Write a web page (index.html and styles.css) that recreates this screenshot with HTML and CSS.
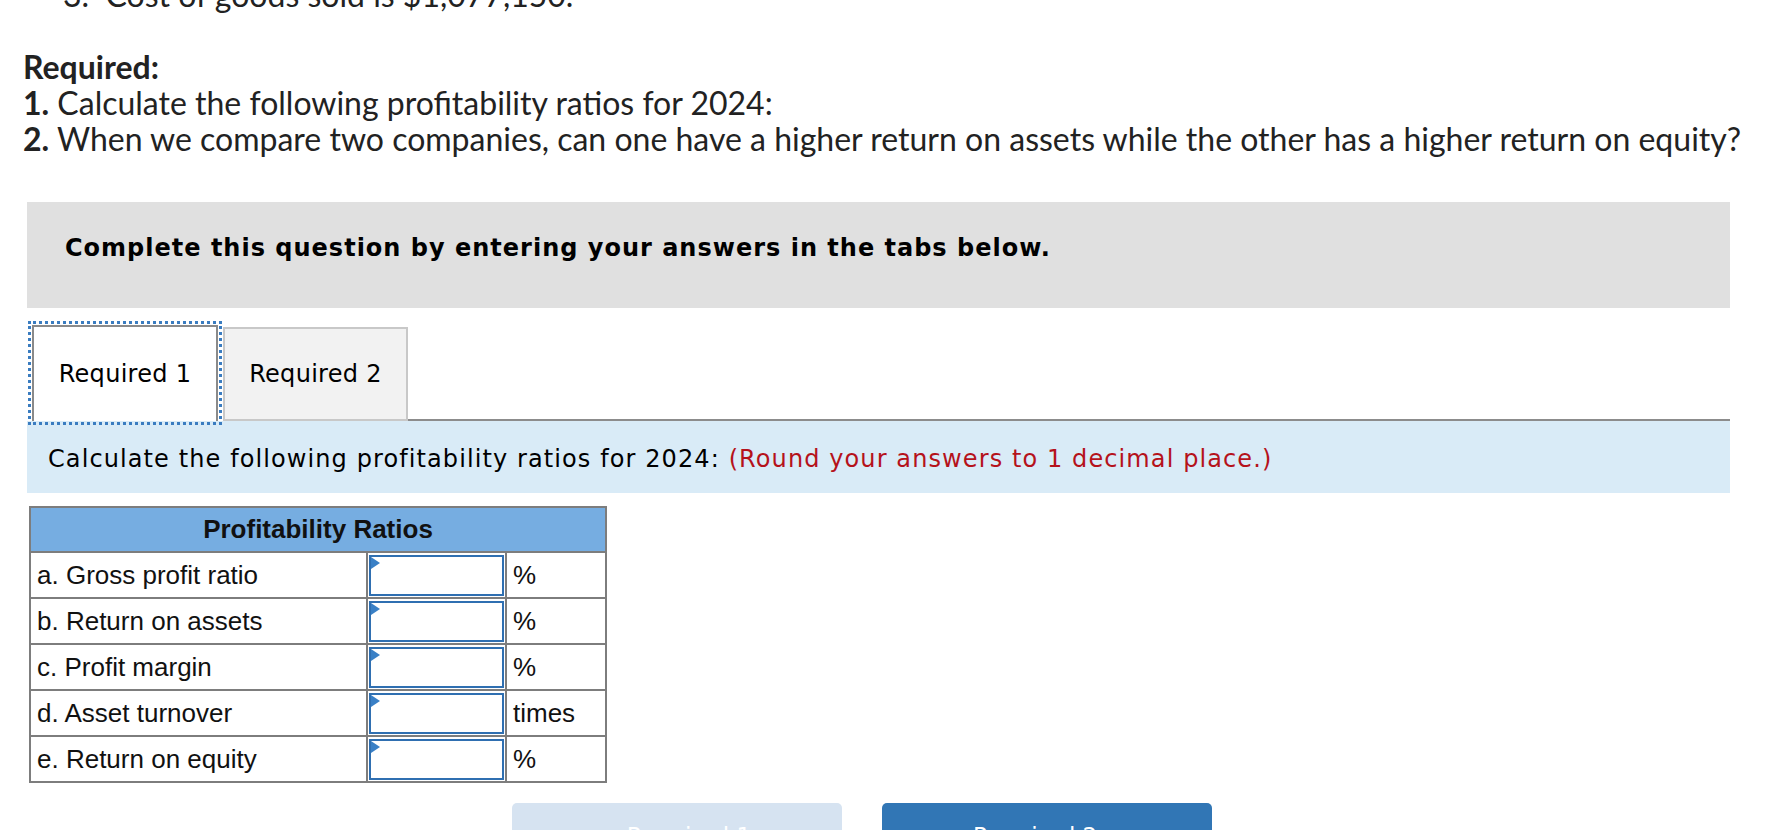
FILE: index.html
```html
<!DOCTYPE html>
<html lang="en">
<head>
<meta charset="utf-8">
<title>Profitability Ratios</title>
<link rel="stylesheet" href="styles.css">
</head>
<body>
<div class="page">
  <p class="given">3.&nbsp; Cost of goods sold is $1,077,150.</p>
  <div class="required">
    <p class="req-title">Required:</p>
    <p class="req-line"><b>1.</b> Calculate the following profitability ratios for 2024:</p>
    <p class="req-line"><b>2.</b> When we compare two companies, can one have a higher return on assets while the other has a higher return on equity?</p>
  </div>

  <div class="instructions">Complete this question by entering your answers in the tabs below.</div>

  <div class="tabs">
    <button class="tab tab-active">Required 1</button>
    <button class="tab tab-idle">Required 2</button>
    <div class="tab-rest"></div>
  </div>

  <div class="prompt">Calculate the following profitability ratios for 2024: <span class="hint">(Round your answers to 1 decimal place.)</span></div>

  <table class="ratios">
    <colgroup>
      <col class="c-label"><col class="c-input"><col class="c-unit">
    </colgroup>
    <thead>
      <tr><th colspan="3">Profitability Ratios</th></tr>
    </thead>
    <tbody>
      <tr><td class="label">a. Gross profit ratio</td><td class="cell-input"><div class="field"><span class="flag"></span></div></td><td class="unit">%</td></tr>
      <tr><td class="label">b. Return on assets</td><td class="cell-input"><div class="field"><span class="flag"></span></div></td><td class="unit">%</td></tr>
      <tr><td class="label">c. Profit margin</td><td class="cell-input"><div class="field"><span class="flag"></span></div></td><td class="unit">%</td></tr>
      <tr><td class="label">d. Asset turnover</td><td class="cell-input"><div class="field"><span class="flag"></span></div></td><td class="unit">times</td></tr>
      <tr><td class="label">e. Return on equity</td><td class="cell-input"><div class="field"><span class="flag"></span></div></td><td class="unit">%</td></tr>
    </tbody>
  </table>

  <div class="nav">
    <button class="nav-btn nav-prev">&#x2039;&nbsp; Required 1</button>
    <button class="nav-btn nav-next">Required 2&nbsp; &#x203A;</button>
  </div>
</div>
</body>
</html>
```

FILE: styles.css
```css
html, body {
  margin: 0;
  padding: 0;
  background: #ffffff;
  overflow: hidden;
}

.page {
  padding-left: 23px;
  width: 1707px;
  font-family: Lato, "Open Sans", sans-serif;
  color: #222222;
}

.given {
  margin: -23px 0 0 40px;
  font-size: 32px;
  line-height: 36px;
  white-space: nowrap;
}

.required {
  margin-top: 36px;
}

.required p {
  margin: 0;
  font-size: 32px;
  line-height: 36px;
  white-space: nowrap;
}

.req-title {
  font-weight: 700;
}

.req-line b {
  font-weight: 700;
}

.instructions {
  margin: 45px 0 0 4px;
  width: 1703px;
  box-sizing: border-box;
  height: 106px;
  padding: 32px 0 0 38px;
  background: #e0e0e0;
  font-family: "DejaVu Sans", Verdana, sans-serif;
  font-weight: 700;
  font-size: 24px;
  letter-spacing: 1px;
  color: #000000;
}

.tabs {
  display: flex;
  align-items: flex-end;
  margin: 17px 0 0 9px;
  width: 1698px;
  height: 96px;
}

.tab {
  box-sizing: border-box;
  height: 94px;
  padding: 0;
  font-family: "DejaVu Sans", Verdana, sans-serif;
  font-size: 24px;
  letter-spacing: 0.3px;
  color: #000000;
  cursor: pointer;
}

.tab-active {
  width: 186px;
  background: #ffffff;
  border: 2px solid #8a8a8a;
  border-bottom: none;
  outline: 3px dotted #3a7cc0;
  outline-offset: 1px;
  height: 96px;
  position: relative;
  z-index: 1;
}

.tab-idle {
  width: 185px;
  margin-left: 5px;
  background: #f2f2f2;
  border: 2px solid #c8c8c8;
  height: 94px;
}

.tab-rest {
  flex: 1;
  border-bottom: 2px solid #8c8c8c;
}

.prompt {
  margin-left: 4px;
  width: 1703px;
  box-sizing: border-box;
  height: 72px;
  padding: 24px 0 0 21px;
  background: #d9ebf7;
  font-family: "DejaVu Sans", Verdana, sans-serif;
  font-size: 24px;
  letter-spacing: 1.1px;
  color: #000000;
}

.hint {
  color: #b5121b;
}

.ratios {
  margin: 13px 0 0 6px;
  border-collapse: collapse;
  border: 2px solid #7d7d7d;
  font-family: "Liberation Sans", Arial, sans-serif;
  color: #111111;
  table-layout: fixed;
  width: 576px;
}

.c-label { width: 337px; }
.c-input { width: 139px; }
.c-unit { width: 100px; }

.ratios th {
  height: 43px;
  padding: 0;
  background: #76ade1;
  border: 2px solid #7d7d7d;
  font-size: 26px;
  font-weight: 700;
  text-align: center;
  color: #111111;
}

.ratios td {
  height: 42px;
  padding: 0;
  border: 2px solid #7d7d7d;
  font-size: 26px;
  vertical-align: middle;
}

.ratios td.label {
  padding-left: 6px;
}

.ratios td.unit {
  padding-left: 6px;
}

.ratios td.cell-input {
  padding: 1px;
}

.field {
  position: relative;
  box-sizing: border-box;
  height: 41px;
  border: 2px solid #2f6fb1;
  background: #ffffff;
}

.flag {
  position: absolute;
  top: 0;
  left: 0;
  width: 0;
  height: 0;
  border-top: 6px solid transparent;
  border-bottom: 6px solid transparent;
  border-left: 9px solid #3a80c6;
}

.nav {
  display: flex;
  gap: 40px;
  margin: 20px 0 0 489px;
}

.nav-btn {
  width: 330px;
  height: 66px;
  border: none;
  border-radius: 5px;
  font-family: "DejaVu Sans", Verdana, sans-serif;
  font-size: 23px;
  color: #ffffff;
  padding: 0;
}

.nav-prev {
  background: #d6e3f1;
}

.nav-next {
  background: #3176b5;
}
```
